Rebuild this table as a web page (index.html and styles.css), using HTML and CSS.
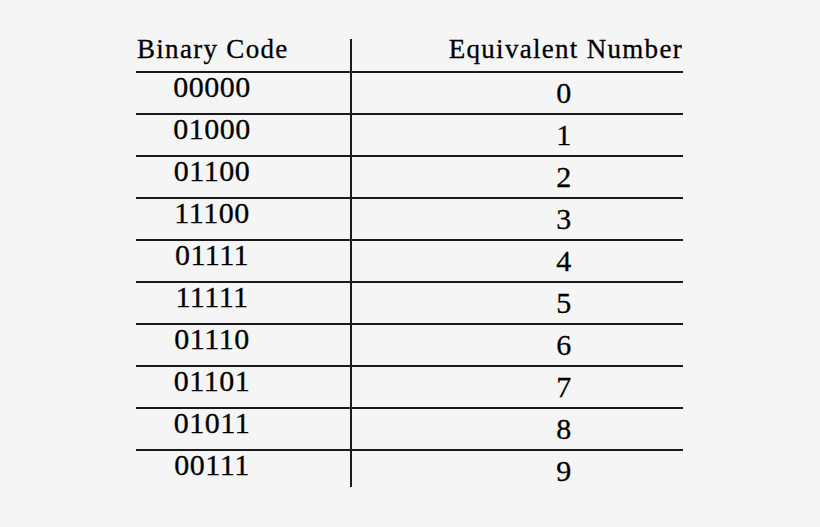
FILE: index.html
```html
<!DOCTYPE html>
<html lang="en">
<head>
<meta charset="utf-8">
<title>Binary Code Table</title>
<link rel="stylesheet" href="styles.css">
</head>
<body>
<div class="table">
  <div class="row head">
    <div class="cell code">Binary Code</div>
    <div class="cell num">Equivalent Number</div>
  </div>
  <div class="row"><div class="cell code">00000</div><div class="cell num">0</div></div>
  <div class="row"><div class="cell code">01000</div><div class="cell num">1</div></div>
  <div class="row"><div class="cell code">01100</div><div class="cell num">2</div></div>
  <div class="row"><div class="cell code">11100</div><div class="cell num">3</div></div>
  <div class="row"><div class="cell code">01111</div><div class="cell num">4</div></div>
  <div class="row"><div class="cell code">11111</div><div class="cell num">5</div></div>
  <div class="row"><div class="cell code">01110</div><div class="cell num">6</div></div>
  <div class="row"><div class="cell code">01101</div><div class="cell num">7</div></div>
  <div class="row"><div class="cell code">01011</div><div class="cell num">8</div></div>
  <div class="row last"><div class="cell code">00111</div><div class="cell num">9</div></div>
</div>
</body>
</html>
```

FILE: styles.css
```css
html, body {
  margin: 0;
  padding: 0;
  background: #f5f5f5;
}

body {
  width: 820px;
  height: 527px;
  overflow: hidden;
  font-family: "Liberation Serif", "Times New Roman", serif;
  color: #000;
}

.table {
  margin-left: 136px;
  padding-top: 39px;
  width: 547px;
}

.row {
  display: grid;
  grid-template-columns: 214px 333px;
  grid-template-rows: minmax(0, 1fr);
  height: 40px;
  border-top: 2px solid #1a1a1a;
}

.row.head {
  border-top: none;
  height: 32px;
}

.row.last {
  height: 36px;
}

.cell {
  font-size: 30px;
  letter-spacing: 0.5px;
  white-space: nowrap;
  -webkit-text-stroke: 0.3px #000;
}

.cell.code {
  padding-right: 62px;
  text-align: center;
  line-height: 28px;
}

.cell.num {
  border-left: 2px solid #1a1a1a;
  padding-left: 94px;
  padding-right: 1px;
  text-align: center;
  line-height: 40px;
}

.row.head .cell {
  font-size: 27px;
  letter-spacing: 1.3px;
  line-height: 20px;
}

.row.head .cell.code {
  text-align: left;
  padding-left: 1px;
  padding-right: 0;
}

.row.head .cell.num {
  text-align: right;
  padding-right: 0;
}
```
